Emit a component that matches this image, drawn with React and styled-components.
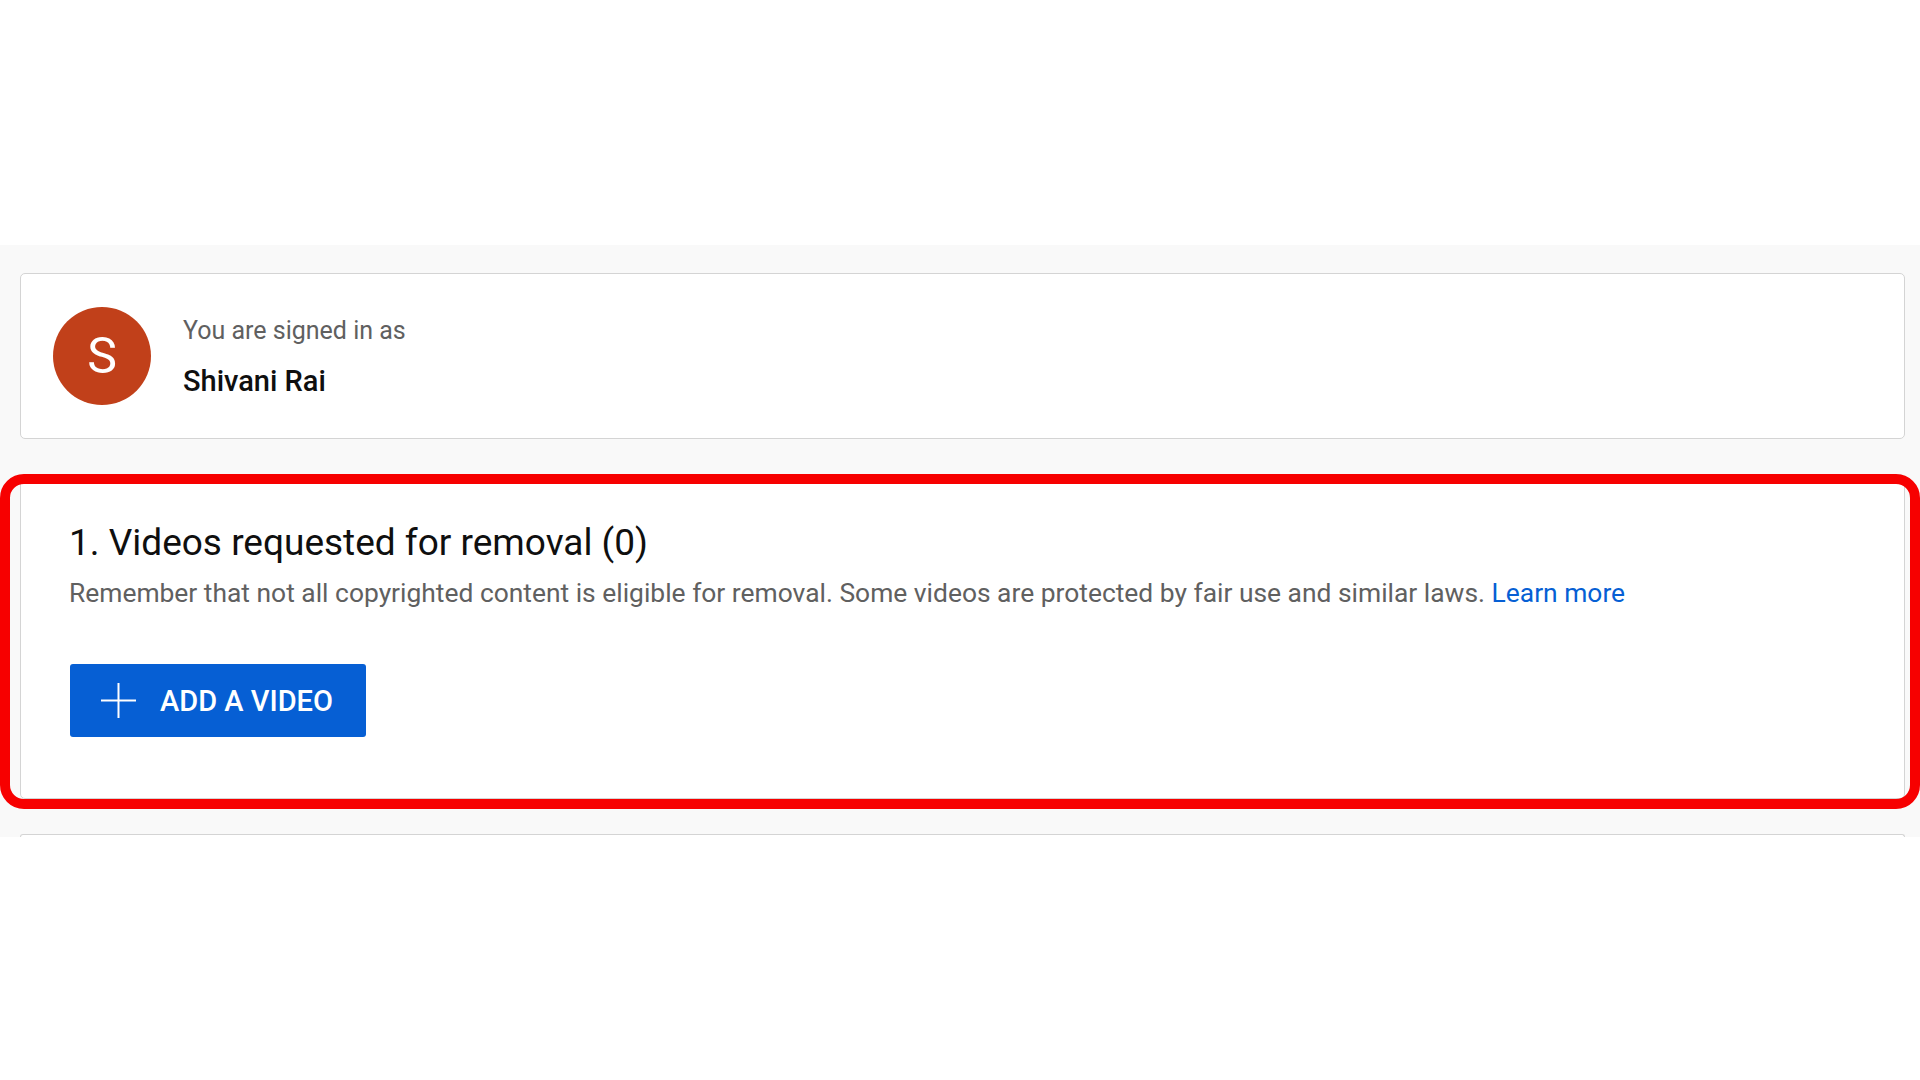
import React from "react";
import styled, { createGlobalStyle } from "styled-components";

const Global = createGlobalStyle`
  html, body { margin: 0; padding: 0; background: #ffffff; }
  body { font-family: Roboto, "Noto Sans", Arial, sans-serif; }
  * { box-sizing: border-box; }
`;

const Page = styled.div`
  width: 1920px;
  height: 1080px;
  background: #ffffff;
  padding-top: 245px;
  overflow: hidden;
`;

const Section = styled.section`
  background: #f9f9f9;
  padding: 28px 15px 0 20px;
  display: flex;
  flex-direction: column;
  gap: 35px;
`;

const Card = styled.div`
  background: #ffffff;
  border: 1px solid #d4d4d4;
  border-radius: 5px;
`;

const AccountCard = styled(Card)`
  height: 166px;
  display: flex;
  align-items: center;
  padding-left: 32px;
  gap: 33px;
`;

const Avatar = styled.div`
  width: 98px;
  height: 98px;
  border-radius: 50%;
  background: #c1401a;
  color: #ffffff;
  display: flex;
  align-items: center;
  justify-content: center;
  font-size: 50px;
  font-weight: 400;
  flex-shrink: 0;
`;

const AccountText = styled.div`
  display: flex;
  flex-direction: column;
  gap: 16px;
  margin-top: 2px;
  margin-left: -1px;
`;

const SignedLabel = styled.div`
  font-size: 25px;
  line-height: 32px;
  color: #606060;
`;

const UserName = styled.div`
  font-size: 29px;
  line-height: 36px;
  font-weight: 500;
  color: #0f0f0f;
`;

const Highlight = styled.div`
  position: relative;
`;

const Annotation = styled.div`
  position: absolute;
  left: -20px;
  right: -15px;
  top: 0;
  bottom: -10px;
  border: 10px solid #f70000;
  border-radius: 24px;
  pointer-events: none;
`;

const RemovalCard = styled(Card)`
  padding: 46px 48px 61px 48px;
  display: flex;
  flex-direction: column;
  align-items: flex-start;
`;

const Heading = styled.h2`
  margin: 0;
  font-size: 37px;
  line-height: 44px;
  font-weight: 400;
  color: #0f0f0f;
`;

const Description = styled.p`
  margin: 10px 0 0 0;
  font-size: 26.4px;
  line-height: 36px;
  color: #606060;
`;

const Link = styled.a`
  color: #065fd4;
  text-decoration: none;
`;

const PrimaryButton = styled.button`
  margin-top: 53px;
  margin-left: 1px;
  height: 73px;
  display: flex;
  align-items: center;
  gap: 24px;
  padding: 0 33px 0 31px;
  background: #065fd4;
  color: #ffffff;
  border: none;
  border-radius: 3px;
  font-family: Roboto, Arial, sans-serif;
  font-size: 29px;
  font-weight: 500;
  text-transform: uppercase;
  cursor: pointer;
`;

const NextCard = styled(Card)`
  height: 3px;
  border-bottom: none;
  border-radius: 5px 5px 0 0;
`;

const PlusIcon = () => (
  <svg width="35" height="35" viewBox="0 0 35 35" fill="none">
    <path d="M17.5 0 V35 M0 17.5 H35" stroke="#ffffff" strokeWidth="2" />
  </svg>
);

export default function App() {
  return (
    <>
      <Global />
      <Page>
        <Section>
          <AccountCard>
            <Avatar>S</Avatar>
            <AccountText>
              <SignedLabel>You are signed in as</SignedLabel>
              <UserName>Shivani Rai</UserName>
            </AccountText>
          </AccountCard>
          <Highlight>
            <RemovalCard>
              <Heading>1. Videos requested for removal (0)</Heading>
              <Description>
                Remember that not all copyrighted content is eligible for removal. Some videos are protected by fair use and similar laws.{" "}
                <Link href="#">Learn more</Link>
              </Description>
              <PrimaryButton>
                <PlusIcon />
                Add a video
              </PrimaryButton>
            </RemovalCard>
            <Annotation />
          </Highlight>
          <NextCard />
        </Section>
      </Page>
    </>
  );
}
